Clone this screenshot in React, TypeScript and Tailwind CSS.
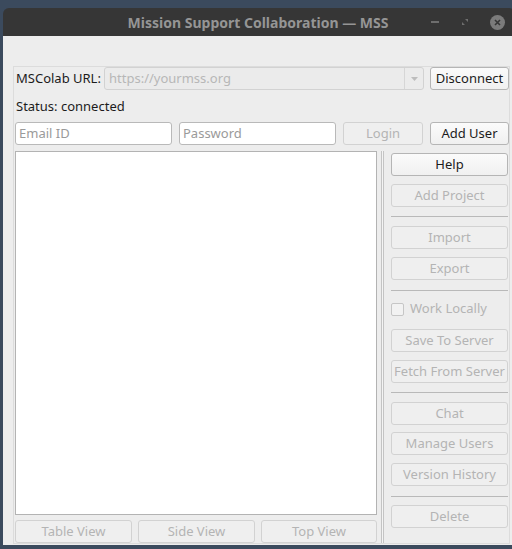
import React from "react";

const font = { fontFamily: '"Noto Sans", "DejaVu Sans", sans-serif' };

interface BtnProps {
  label: string;
  disabled?: boolean;
  className?: string;
}

const Btn: React.FC<BtnProps> = ({ label, disabled, className = "" }) => (
  <div
    className={`h-[23px] shrink-0 flex items-center justify-center rounded-[3px] border text-[13px] whitespace-nowrap ${
      disabled
        ? "border-[#d2d2d2] bg-[#efefef] text-[#b4b4b4]"
        : "border-[#b5b5b5] bg-gradient-to-b from-[#fbfbfb] to-[#f0f0f0] text-[#1c1c1c]"
    } ${className}`}
  >
    {label}
  </div>
);

const Sep = ({ className = "" }: { className?: string }) => (
  <div className={`h-px shrink-0 bg-[#b9b9b9] ${className}`} />
);

export default function App() {
  return (
    <div className="w-[512px] h-[549px] bg-[#3b4a5d] overflow-hidden" style={font}>
      <div className="ml-[3px] mt-[8px] w-[512px] rounded-t-[6px] overflow-hidden">
        {/* title bar */}
        <div className="h-[28px] bg-[#363636] flex items-center relative">
          <div className="w-[510px] text-center font-bold text-[14px] text-[#959595]">
            Mission Support Collaboration — MSS
          </div>
          <div className="absolute left-[428px] top-[13px] w-[8px] h-[2px] bg-[#6e6e6e]" />
          <div className="absolute left-[458px] top-[10px] w-[8px] h-[8px]">
            <svg width="8" height="8" viewBox="0 0 8 8">
              <path d="M1 7 L1 4 L4 7 Z M7 1 L7 4 L4 1 Z" fill="#6e6e6e" />
            </svg>
          </div>
          <div className="absolute left-[487px] top-[7px] w-[15px] h-[15px] rounded-full bg-[#7b7b7b] flex items-center justify-center">
            <svg width="7" height="7" viewBox="0 0 7 7">
              <path d="M1 1 L6 6 M6 1 L1 6" stroke="#363636" strokeWidth="1.6" />
            </svg>
          </div>
        </div>
        {/* body */}
        <div className="h-[509px] bg-[#ededed] pt-[30px] pl-[10px]">
          <div className="w-[497px] h-[478px] border border-[#dcdcdc] pl-[1px] flex flex-col">
            {/* URL row */}
            <div className="flex items-center h-[23px]">
              <span className="text-[13px] text-[#1c1c1c] w-[89px] pl-px">MSColab URL:</span>
              <div className="w-[320px] h-[23px] border border-[#d2d2d2] rounded-[3px] bg-[#ebebeb] flex items-center">
                <span className="flex-1 pl-[4px] text-[13px] text-[#b7b7b7]">https://yourmss.org</span>
                <div className="w-[19px] h-full border-l border-[#d6d6d6] flex items-center justify-center">
                  <svg width="7" height="4" viewBox="0 0 7 4">
                    <path d="M0 0 L7 0 L3.5 4 Z" fill="#bdbdbd" />
                  </svg>
                </div>
              </div>
              <Btn label="Disconnect" className="ml-[6px] w-[79px]" />
            </div>
            {/* status */}
            <div className="h-[32px] flex items-center text-[13px] text-[#1c1c1c] pl-px pt-[1px]">
              Status: connected
            </div>
            {/* login row */}
            <div className="flex items-center h-[23px] gap-[7px]">
              <div className="w-[158px] h-[23px] border border-[#b9b9b9] rounded-[3px] bg-white flex items-center pl-[3px] text-[13px] text-[#9a9a9a]">
                Email ID
              </div>
              <div className="w-[158px] h-[23px] border border-[#b9b9b9] rounded-[3px] bg-white flex items-center pl-[3px] text-[13px] text-[#9a9a9a]">
                Password
              </div>
              <Btn label="Login" disabled className="w-[80px]" />
              <Btn label="Add User" className="w-[79px]" />
            </div>
            {/* main area */}
            <div className="flex mt-[6px] flex-1">
              <div className="w-[362px] flex flex-col">
                <div className="h-[364px] bg-white border border-[#b3b3b3]" />
                <div className="flex gap-[6px] mt-[5px]">
                  <Btn label="Table View" disabled className="w-[117px]" />
                  <Btn label="Side View" disabled className="w-[117px]" />
                  <Btn label="Top View" disabled className="w-[116px]" />
                </div>
              </div>
              <div className="w-[3px] ml-[4px] border-l border-r border-[#c4c4c4] bg-[#f4f4f4]" />
              <div className="w-[117px] ml-[7px] flex flex-col pt-[2px]">
                <Btn label="Help" />
                <Btn label="Add Project" disabled className="mt-[8px]" />
                <Sep className="mt-[9px]" />
                <Btn label="Import" disabled className="mt-[9px]" />
                <Btn label="Export" disabled className="mt-[8px]" />
                <Sep className="mt-[10px]" />
                <div className="h-[30px] mt-[3px] shrink-0 flex items-center text-[13px] text-[#b4b4b4]">
                  <div className="w-[13px] h-[13px] border border-[#c6c6c6] rounded-[2px] bg-[#f2f2f2] mr-[6px]" />
                  Work Locally
                </div>
                <Btn label="Save To Server" disabled className="mt-[5px]" />
                <Btn label="Fetch From Server" disabled className="mt-[8px]" />
                <Sep className="mt-[9px]" />
                <Btn label="Chat" disabled className="mt-[9px]" />
                <Btn label="Manage Users" disabled className="mt-[7px]" />
                <Btn label="Version History" disabled className="mt-[8px]" />
                <Sep className="mt-[10px]" />
                <Btn label="Delete" disabled className="mt-[8px]" />
              </div>
            </div>
          </div>
        </div>
      </div>
    </div>
  );
}
